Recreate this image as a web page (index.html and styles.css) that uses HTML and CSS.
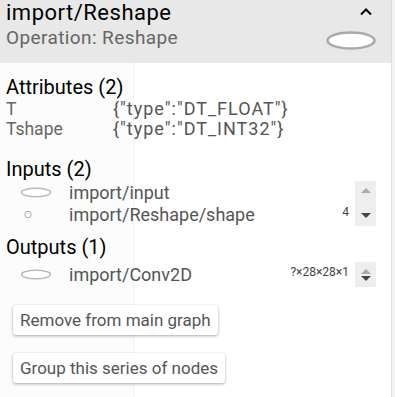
FILE: index.html
```html
<!DOCTYPE html>
<html lang="en">
<head>
  <meta charset="UTF-8">
  <title>Node info</title>
  <link rel="stylesheet" href="styles.css">
</head>
<body>
  <div class="panel">
    <div class="header">
      <div class="header-text">
        <div class="title">import/Reshape</div>
        <div class="subtitle">Operation: Reshape</div>
      </div>
      <div class="header-icons">
        <svg class="chevron" width="14" height="9" viewBox="0 0 14 9"><path d="M2 7.5 L7 2.5 L12 7.5" fill="none" stroke="#000" stroke-width="2"/></svg>
        <svg class="node-shape" width="52" height="21" viewBox="0 0 52 21"><ellipse cx="26" cy="10.5" rx="23.5" ry="8" fill="#fff" stroke="#aaa" stroke-width="2.5"/></svg>
      </div>
    </div>
    <div class="content">
      <div class="section">
        <div class="section-title">Attributes (2)</div>
        <div class="attr-row"><span class="attr-key">T</span><span class="attr-val">{"type":"DT_FLOAT"}</span></div>
        <div class="attr-row"><span class="attr-key">Tshape</span><span class="attr-val">{"type":"DT_INT32"}</span></div>
      </div>
      <div class="section inputs-section">
        <div class="section-title">Inputs (2)</div>
        <div class="list-wrap inputs">
          <div class="list">
            <div class="item">
              <span class="icon"><svg width="32" height="11" viewBox="0 0 32 11"><ellipse cx="16" cy="5.5" rx="14.5" ry="4.2" fill="#fff" stroke="#bbb" stroke-width="1.5"/></svg></span>
              <span class="name">import/input</span>
            </div>
            <div class="item">
              <span class="icon"><svg width="32" height="11" viewBox="0 0 32 11"><circle cx="8" cy="5.5" r="3.2" fill="#fff" stroke="#aaa" stroke-width="1"/></svg></span>
              <span class="name">import/Reshape/shape</span>
              <span class="size">4</span>
            </div>
          </div>
          <div class="scroller">
            <span class="arrow-up"></span>
            <span class="arrow-down"></span>
          </div>
        </div>
      </div>
      <div class="section outputs-section">
        <div class="section-title">Outputs (1)</div>
        <div class="list-wrap outputs">
          <div class="list">
            <div class="item">
              <span class="icon"><svg width="32" height="11" viewBox="0 0 32 11"><ellipse cx="16" cy="5.5" rx="14.5" ry="4.2" fill="#fff" stroke="#bbb" stroke-width="1.5"/></svg></span>
              <span class="name">import/Conv2D</span>
              <span class="size">?×28×28×1</span>
            </div>
          </div>
          <div class="scroller">
            <span class="arrow-up"></span>
            <span class="arrow-down"></span>
          </div>
        </div>
      </div>
      <div class="buttons">
        <button class="btn">Remove from main graph</button>
        <button class="btn">Group this series of nodes</button>
      </div>
    </div>
  </div>
</body>
</html>
```
FILE: styles.css
```css
body {
  margin: 0;
  font-family: Roboto, "Noto Sans", sans-serif;
  background-color: #f3f3f3;
}
.panel {
  width: 391px;
  height: 397px;
  background-color: #fff;
  border-right: 1px solid #ddd;
  overflow: hidden;
}
.header {
  display: flex;
  justify-content: space-between;
  height: 63px;
  padding: 0 14px 0 6px;
  background-color: #e8e8e8;
}
.title {
  font-size: 22px;
  line-height: 26px;
  letter-spacing: 0.5px;
  color: #000;
}
.subtitle {
  font-size: 19px;
  line-height: 24px;
  letter-spacing: 0.4px;
  color: #666;
}
.header-icons {
  display: flex;
  flex-direction: column;
  align-items: flex-end;
}
.chevron {
  margin-top: 7px;
  margin-right: 4px;
}
.node-shape {
  margin-top: 14px;
}
.content {
  padding: 12px 6px 0;
  background: linear-gradient(to right, #fcfcfc 133px, #f1f1f1 133px, #f1f1f1 134px, #fff 134px);
  height: 322px;
}
.section-title {
  font-size: 20px;
  line-height: 24px;
  color: #000;
}
.attr-row {
  display: flex;
  align-items: baseline;
  height: 20px;
  line-height: 20px;
}
.attr-key {
  width: 107px;
  color: #666;
  font-size: 17.5px;
}
.attr-val {
  color: #555;
  font-size: 18px;
  letter-spacing: 1px;
}
.inputs-section {
  margin-top: 18px;
}
.outputs-section {
  margin-top: 9px;
}
.outputs {
  margin-top: 3px;
}
.list-wrap {
  display: flex;
  align-items: center;
}
.list {
  flex: 1;
}
.item {
  display: flex;
  align-items: center;
  height: 22px;
  padding-left: 14px;
}
.icon {
  width: 49px;
  display: flex;
}
.name {
  flex: 1;
  font-size: 18px;
  color: #555;
}
.size {
  font-size: 12px;
  color: #444;
  margin-right: 6px;
  margin-bottom: 5px;
}
.scroller {
  width: 21px;
  background-color: #eee;
  display: flex;
  flex-direction: column;
  align-items: center;
  justify-content: space-between;
  margin-right: 9px;
  box-sizing: border-box;
}
.inputs .scroller {
  height: 45px;
  padding: 7px 0 8px;
}
.outputs .scroller {
  height: 25px;
  padding: 7px 0 6px;
}
.arrow-up {
  width: 0;
  height: 0;
  border-left: 5px solid transparent;
  border-right: 5px solid transparent;
  border-bottom: 5px solid #aaa;
}
.arrow-down {
  width: 0;
  height: 0;
  border-left: 5px solid transparent;
  border-right: 5px solid transparent;
  border-top: 5px solid #444;
}
.buttons {
  display: flex;
  flex-direction: column;
  align-items: flex-start;
  gap: 18px;
  padding-left: 7px;
  margin-top: 18px;
}
.btn {
  font-family: Roboto, "Noto Sans", sans-serif;
  font-size: 17px;
  color: #555;
  background-color: #fff;
  border: none;
  border-radius: 3px;
  height: 30px;
  padding: 0 7px;
  box-shadow: 0 1px 3px rgba(0, 0, 0, 0.35);
}
```
